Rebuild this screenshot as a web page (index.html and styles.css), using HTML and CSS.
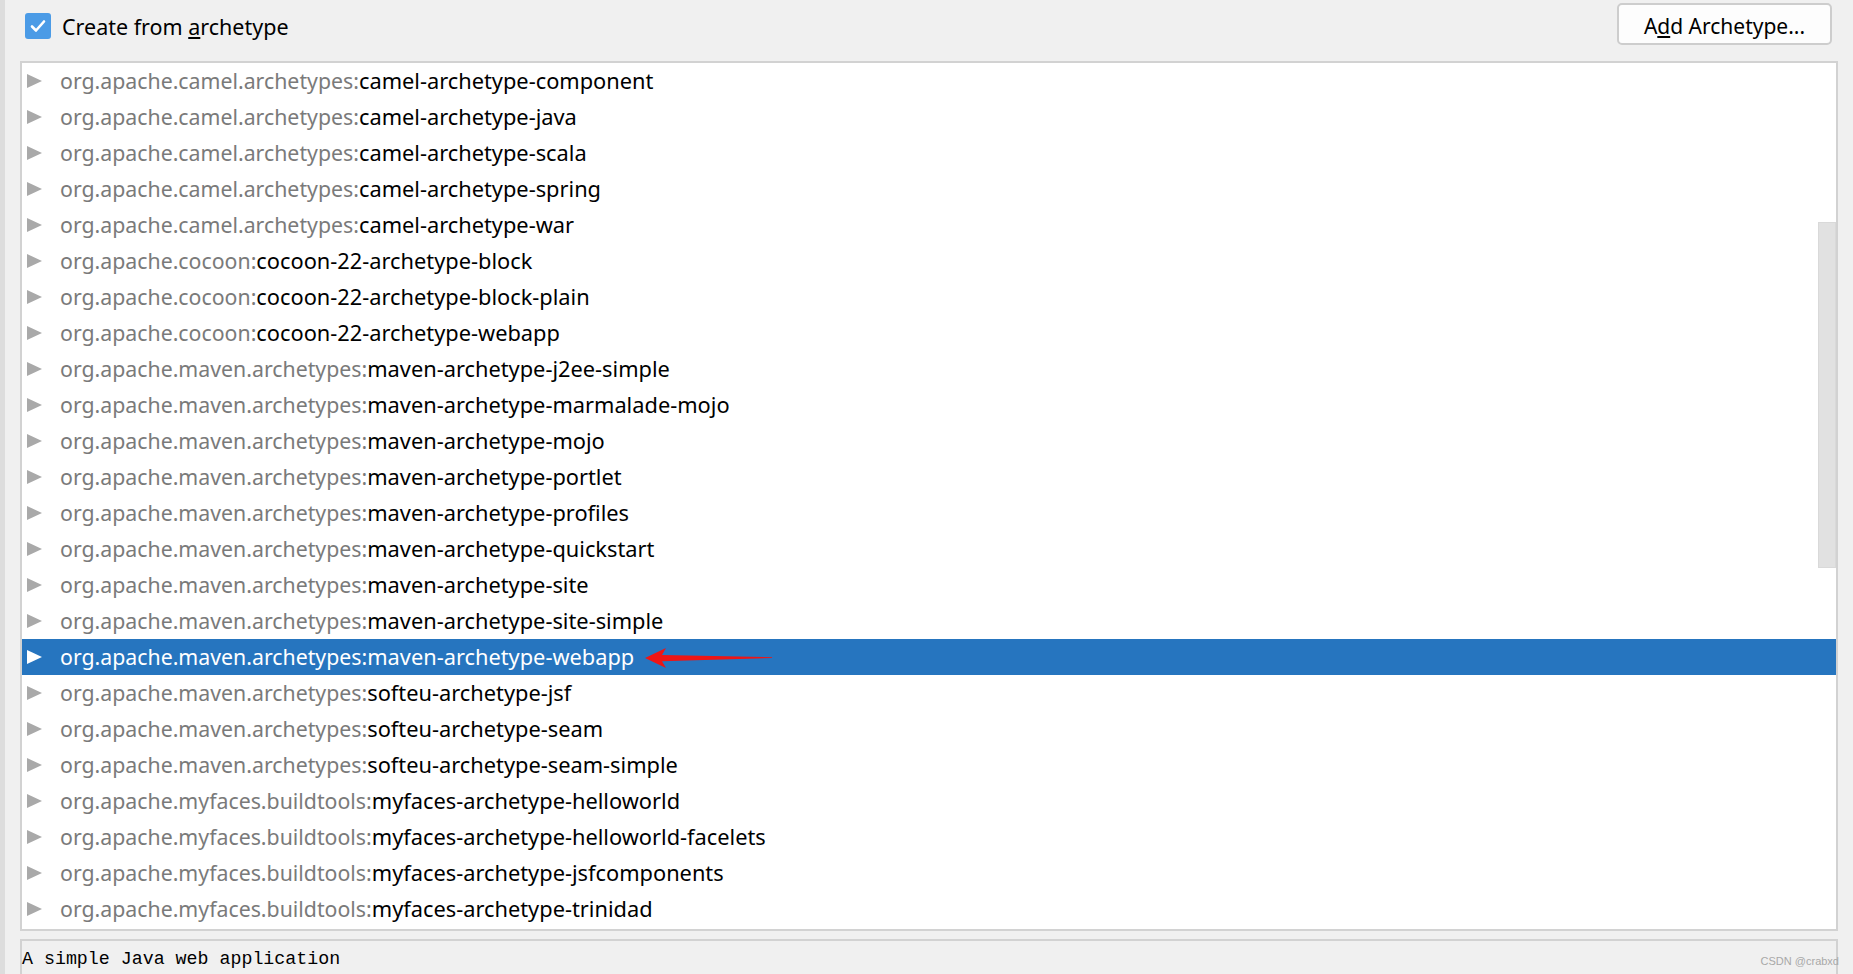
FILE: index.html
```html
<!DOCTYPE html>
<html lang="en">
	<head>
		<meta charset="UTF-8" />
		<meta name="viewport" content="width=device-width, initial-scale=1.0" />
		<title>New Project - Maven</title>
		<link rel="stylesheet" href="styles.css">
	</head>
	<body>
		<div class="dialog">
			<div class="toolbar">
				<label class="check">
					<span class="box">
						<svg width="16" height="14" viewBox="0 0 16 14"><path d="M2 7.5 L6 11.5 L14 2.5" fill="none" stroke="#fff" stroke-width="2.6" stroke-linecap="round" stroke-linejoin="round"/></svg>
					</span>
					<span class="label">Create from <u>a</u>rchetype</span>
				</label>
				<button class="add-button">A<u>d</u>d Archetype...</button>
			</div>

			<div class="list">
				<div class="rows" id="rows"></div>
				<div class="thumb"></div>
				<svg class="arrow" width="130" height="24" viewBox="0 0 130 24">
					<path d="M0 11 L21 1 L17 8 L127 10.2 L127 11 L17 14.2 L21 21 Z" fill="#ee1515"/>
				</svg>
			</div>

			<div class="description">A simple Java web application</div>
			<div class="watermark">CSDN @crabxd</div>
		</div>

		<script>
			let archetypes = [
				["org.apache.camel.archetypes", "camel-archetype-component"],
				["org.apache.camel.archetypes", "camel-archetype-java"],
				["org.apache.camel.archetypes", "camel-archetype-scala"],
				["org.apache.camel.archetypes", "camel-archetype-spring"],
				["org.apache.camel.archetypes", "camel-archetype-war"],
				["org.apache.cocoon", "cocoon-22-archetype-block"],
				["org.apache.cocoon", "cocoon-22-archetype-block-plain"],
				["org.apache.cocoon", "cocoon-22-archetype-webapp"],
				["org.apache.maven.archetypes", "maven-archetype-j2ee-simple"],
				["org.apache.maven.archetypes", "maven-archetype-marmalade-mojo"],
				["org.apache.maven.archetypes", "maven-archetype-mojo"],
				["org.apache.maven.archetypes", "maven-archetype-portlet"],
				["org.apache.maven.archetypes", "maven-archetype-profiles"],
				["org.apache.maven.archetypes", "maven-archetype-quickstart"],
				["org.apache.maven.archetypes", "maven-archetype-site"],
				["org.apache.maven.archetypes", "maven-archetype-site-simple"],
				["org.apache.maven.archetypes", "maven-archetype-webapp"],
				["org.apache.maven.archetypes", "softeu-archetype-jsf"],
				["org.apache.maven.archetypes", "softeu-archetype-seam"],
				["org.apache.maven.archetypes", "softeu-archetype-seam-simple"],
				["org.apache.myfaces.buildtools", "myfaces-archetype-helloworld"],
				["org.apache.myfaces.buildtools", "myfaces-archetype-helloworld-facelets"],
				["org.apache.myfaces.buildtools", "myfaces-archetype-jsfcomponents"],
				["org.apache.myfaces.buildtools", "myfaces-archetype-trinidad"]
			];
			let selected = 16;
			let rowsElement = document.getElementById("rows");

			archetypes.forEach((item, index) => {
				let row = document.createElement("div");
				row.className = index === selected ? "row selected" : "row";
				row.innerHTML =
					'<span class="toggle"></span>' +
					'<span class="group">' + item[0] + ':</span>' +
					'<span class="artifact">' + item[1] + '</span>';
				rowsElement.appendChild(row);
			});
		</script>
	</body>
</html>
```

FILE: styles.css
```css
body {
	margin: 0;
	background-color: #f0f0f0;
	font-family: "Noto Sans", "Open Sans", sans-serif;
	height: 974px;
	overflow: hidden;
}
.dialog {
	position: relative;
	height: 100%;
	border-left: 5px solid #dddddd;
	padding-left: 15px;
	padding-right: 15px;
}
.toolbar {
	display: flex;
	justify-content: space-between;
	align-items: flex-start;
	height: 61px;
}
.check {
	display: flex;
	align-items: center;
	gap: 11px;
	margin-top: 12px;
	margin-left: 5px;
}
.box {
	width: 26px;
	height: 26px;
	border-radius: 3px;
	background-color: #4b9be6;
	display: flex;
	align-items: center;
	justify-content: center;
}
.label {
	font-size: 21.5px;
	color: #000;
	line-height: 26px;
	padding-top: 2px;
}
.add-button {
	margin-top: 3px;
	margin-right: 6px;
	width: 215px;
	height: 42px;
	background-color: #fdfdfd;
	border: 2px solid #cdcdcd;
	border-radius: 5px;
	font-family: inherit;
	font-size: 21px;
	color: #000;
	padding: 3px 0 0 0;
}
.list {
	position: relative;
	height: 866px;
	background-color: #fff;
	border: 2px solid #d2d2d2;
	overflow: hidden;
}
.row {
	box-sizing: border-box;
	display: flex;
	align-items: center;
	height: 36px;
	padding-left: 5px;
	padding-bottom: 2px;
	white-space: nowrap;
}
.toggle {
	width: 0;
	height: 0;
	border-top: 7px solid transparent;
	border-bottom: 7px solid transparent;
	border-left: 15px solid #a9a9a9;
	margin-right: 18px;
	margin-top: 2px;
}
.group {
	color: #7a7a7a;
	font-size: 21.3px;
}
.artifact {
	color: #000;
	font-size: 21.8px;
}
.row.selected {
	background-color: #2675bf;
}
.row.selected .toggle {
	border-left-color: #fff;
}
.row.selected .group,
.row.selected .artifact {
	color: #fff;
}
.thumb {
	position: absolute;
	right: 0;
	top: 159px;
	width: 16px;
	height: 344px;
	background-color: #e1e1e1;
	border: 1px solid #d9d9d9;
}
.arrow {
	position: absolute;
	left: 623px;
	top: 584px;
}
.description {
	margin-top: 8px;
	height: 40px;
	border: 2px solid #d2d2d2;
	border-bottom: none;
	font-family: "Liberation Mono", monospace;
	font-size: 18.3px;
	line-height: 36px;
	color: #000;
}
.watermark {
	position: absolute;
	right: 14px;
	bottom: 7px;
	font-family: "Liberation Sans", sans-serif;
	font-size: 11px;
	color: #a8a8a8;
}
```
